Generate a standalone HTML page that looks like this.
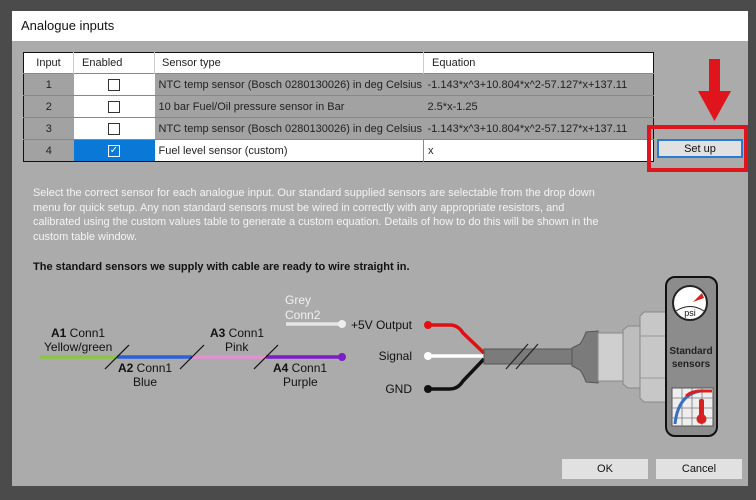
<!DOCTYPE html>
<html><head><meta charset="utf-8"><style>
*{margin:0;padding:0;box-sizing:border-box}
body{width:756px;height:500px;background:#4b4b4b;font-family:"Liberation Sans",sans-serif;position:relative;overflow:hidden}
.dlg{position:absolute;left:12px;top:11px;width:736px;height:475px;background:#ababab}
.title{position:absolute;left:0;top:0;width:736px;height:30px;background:#fff;font-size:13px;color:#111;padding:7px 0 0 9px}
table{position:absolute;left:11px;top:41px;border-collapse:collapse;border:1px solid #111;font-size:11px;color:#222}
td{height:22px;padding:0 0 0 4px;border-top:1px solid #888;white-space:nowrap}
tr.h td{background:#fff;border-top:none;height:21px}
td.c{text-align:center;padding:0}
.g{background:#a2a2a2}.w{background:#fff}.b{background:#0a78d6}
.cb{display:inline-block;width:12px;height:12px;border:1px solid #333;background:#fff;vertical-align:middle}
.btn{position:absolute;background:#e1e1e1;font-size:11px;color:#111;text-align:center}
.p{position:absolute;left:21px;top:175px;white-space:nowrap;font-size:10.95px;line-height:14.5px;color:#f4f4f4}
.bold{position:absolute;left:21px;top:250px;font-size:11px;font-weight:bold;color:#111}
</style></head><body>
<div class="dlg">
<div class="title">Analogue inputs</div>
<table>
<tr class="h"><td class="c" style="width:50px">Input</td><td style="width:81px;border-left:1px solid #ccc;padding-left:8px">Enabled</td><td style="width:269px;border-left:1px solid #ccc;padding-left:7px">Sensor type</td><td style="width:230px;border-left:1px solid #ccc;padding-left:8px">Equation</td></tr>
<tr><td class="c g">1</td><td class="c w"><span class="cb"></span></td><td class="g">NTC temp sensor (Bosch 0280130026) in deg Celsius</td><td class="g">-1.143*x^3+10.804*x^2-57.127*x+137.11</td></tr>
<tr><td class="c g">2</td><td class="c w"><span class="cb"></span></td><td class="g">10 bar Fuel/Oil pressure sensor in Bar</td><td class="g">2.5*x-1.25</td></tr>
<tr><td class="c g">3</td><td class="c w"><span class="cb"></span></td><td class="g">NTC temp sensor (Bosch 0280130026) in deg Celsius</td><td class="g">-1.143*x^3+10.804*x^2-57.127*x+137.11</td></tr>
<tr><td class="c g">4</td><td class="c b"><span class="cb" style="border-color:#fff;background:#0a78d6;color:#fff;font-size:10px;line-height:10px">✓</span></td><td class="w">Fuel level sensor (custom)</td><td class="w" style="border-left:1px solid #888">x</td></tr>
</table>
<div style="position:absolute;left:635px;top:114px;width:101px;height:47px;border:4px solid #e0141c"></div>
<div class="btn" style="left:645px;top:128px;width:86px;height:19px;border:2px solid #2a7ad0;line-height:16px;padding-top:0">Set up</div>
<svg style="position:absolute;left:682px;top:48px" width="40" height="64"><rect x="15" y="0" width="11" height="36" fill="#e0141c"/><polygon points="4,32 37,32 20.5,62" fill="#e0141c"/></svg>
<div class="p">Select the correct sensor for each analogue input. Our standard supplied sensors are selectable from the drop down<br>menu for quick setup. Any non standard sensors must be wired in correctly with any appropriate resistors, and<br>calibrated using the custom values table to generate a custom equation. Details of how to do this will be shown in the<br>custom table window.</div>
<div class="bold">The standard sensors we supply with cable are ready to wire straight in.</div>
<div class="btn" style="left:550px;top:448px;width:86px;height:20px;line-height:20px">OK</div>
<div class="btn" style="left:644px;top:448px;width:86px;height:20px;line-height:20px">Cancel</div>
</div>
<svg style="position:absolute;left:0;top:0" width="756" height="500" font-family="Liberation Sans, sans-serif" font-size="12" fill="#111">
<line x1="40" y1="357" x2="117" y2="357" stroke="#8cc63f" stroke-width="3.5"/>
<line x1="117" y1="357" x2="192" y2="357" stroke="#2f5fd8" stroke-width="3.5"/>
<line x1="192" y1="357" x2="266" y2="357" stroke="#e88fd0" stroke-width="3.5"/>
<line x1="266" y1="357" x2="343" y2="357" stroke="#7b1fc4" stroke-width="3.5"/>
<circle cx="342" cy="357" r="4" fill="#7b1fc4"/>
<line x1="286" y1="324" x2="342" y2="324" stroke="#e6e6e6" stroke-width="3.5"/>
<circle cx="342" cy="324" r="4" fill="#eee"/>
<g stroke="#111" stroke-width="1.2"><line x1="105" y1="369" x2="129" y2="345"/><line x1="180" y1="369" x2="204" y2="345"/><line x1="254" y1="369" x2="278" y2="345"/></g>
<text x="51" y="337"><tspan font-weight="bold">A1</tspan> Conn1</text><text x="44" y="351">Yellow/green</text>
<text x="118" y="372"><tspan font-weight="bold">A2</tspan> Conn1</text><text x="133" y="386">Blue</text>
<text x="210" y="337"><tspan font-weight="bold">A3</tspan> Conn1</text><text x="225" y="351">Pink</text>
<text x="273" y="372"><tspan font-weight="bold">A4</tspan> Conn1</text><text x="283" y="386">Purple</text>
<text x="285" y="304" fill="#f0f0f0">Grey</text><text x="285" y="319" fill="#f0f0f0">Conn2</text>
<text x="412" y="329" text-anchor="end">+5V Output</text>
<text x="412" y="360" text-anchor="end">Signal</text>
<text x="412" y="393" text-anchor="end">GND</text>
<path d="M428,325 H450 Q458,325 463,333 L484,353" stroke="#e01010" stroke-width="3.5" fill="none"/>
<circle cx="428" cy="325" r="4" fill="#e01010"/>
<line x1="428" y1="356" x2="484" y2="356" stroke="#fff" stroke-width="3.5"/><circle cx="428" cy="356" r="4" fill="#fff"/>
<path d="M428,389 H450 Q458,389 463,381 L484,359" stroke="#111" stroke-width="3.5" fill="none"/>
<circle cx="428" cy="389" r="4" fill="#111"/>
<rect x="484" y="349" width="90" height="15" fill="#7b7b7b" stroke="#555"/>
<g stroke="#222" stroke-width="1.2"><line x1="506" y1="369" x2="528" y2="344"/><line x1="516" y1="369" x2="538" y2="344"/></g>
<path d="M572,348 L580,344 Q584,338 586,332 L598,331 L598,383 L586,382 Q584,376 580,370 L572,366 Z" fill="#7b7b7b" stroke="#555"/>
<rect x="598" y="333" width="25" height="48" fill="#cfcfcf" stroke="#888"/>
<path d="M623,330 L628,326 L640,326 L640,388 L628,388 L623,384 Z" fill="#bdbdbd" stroke="#888"/>
<path d="M640,316 L644,312 L668,312 L668,402 L644,402 L640,398 Z" fill="#c7c7c7" stroke="#888"/>
<line x1="640" y1="336" x2="668" y2="336" stroke="#999"/><line x1="640" y1="378" x2="668" y2="378" stroke="#999"/>
<rect x="666" y="277" width="51" height="159" rx="9" fill="#8c8c8c" stroke="#111" stroke-width="2"/>
<circle cx="690" cy="303" r="17" fill="#fff" stroke="#222" stroke-width="2"/>
<path d="M676,311 Q690,302 704,311" stroke="#222" fill="none"/>
<path d="M693,302 L702,293 L704,298 Z" fill="#d82020"/>
<text x="690" y="316" font-size="9" text-anchor="middle">psi</text>
<text x="691" y="354" font-size="10" font-weight="bold" text-anchor="middle" fill="#222">Standard</text>
<text x="691" y="367" font-size="10" font-weight="bold" text-anchor="middle" fill="#222">sensors</text>
<rect x="672" y="388" width="41" height="38" fill="#eee" stroke="#555"/>
<g stroke="#777" stroke-width="0.8"><line x1="682" y1="388" x2="682" y2="426"/><line x1="692" y1="388" x2="692" y2="426"/><line x1="702" y1="388" x2="702" y2="426"/><line x1="672" y1="398" x2="713" y2="398"/><line x1="672" y1="408" x2="713" y2="408"/><line x1="672" y1="418" x2="713" y2="418"/></g>
<path d="M675,424 Q678,395 700,391 H712" stroke="#3a6fc0" stroke-width="3" fill="none"/>
<path d="M686,396 Q692,391 700,391 H712" stroke="#d82020" stroke-width="3" fill="none"/>
<rect x="699" y="399" width="5" height="18" rx="2" fill="#d82020"/><circle cx="701.5" cy="419" r="5" fill="#d82020"/>
</svg>
</body></html>
